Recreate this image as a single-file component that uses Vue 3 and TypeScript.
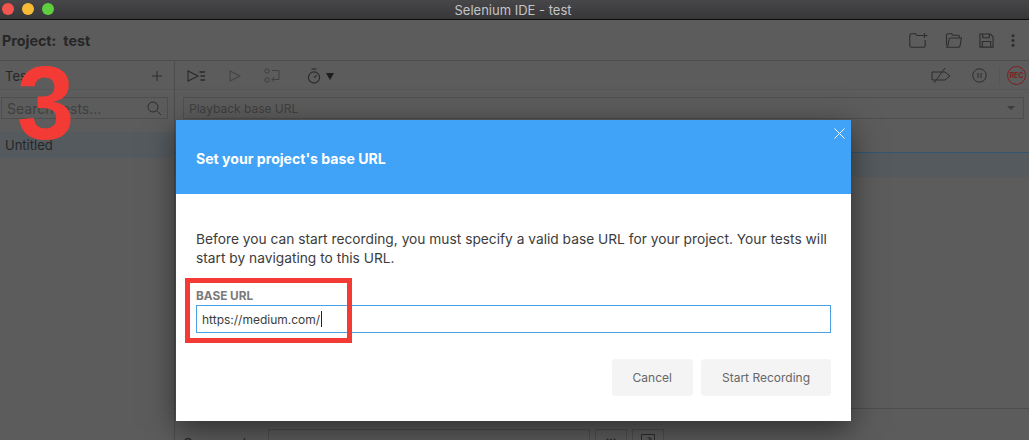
<template>
  <div class="window">
    <div class="titlebar">
      <div class="lights">
        <span class="light red"></span>
        <span class="light yellow"></span>
        <span class="light green"></span>
      </div>
      <span class="window-title">Selenium IDE - test</span>
    </div>

    <header class="project-bar">
      <div class="project-name"><b>Project:</b><b>test</b></div>
      <div class="project-actions">
        <svg width="19" height="15" viewBox="0 0 19 15" fill="none" stroke="#2d2d2d" stroke-width="1.1">
          <path d="M13 2.5H8L6.5 0.8H2.5Q0.8 0.8 0.8 2.5V12.5Q0.8 14.2 2.5 14.2H14.5Q16.2 14.2 16.2 12.5V7" />
          <path d="M15.5 0V5M13 2.5H18.5" />
        </svg>
        <svg width="17" height="15" viewBox="0 0 17 15" fill="none" stroke="#2d2d2d" stroke-width="1.1">
          <path d="M1.5 12.5V2.2Q1.5 0.8 3 0.8H6.5L8 2.2H13Q14.5 2.2 14.5 3.7V4.8" />
          <path d="M1 14.2H13.5Q14.6 14.2 15 13L16.4 5H5.5Q4.4 5 4.1 6.3L3 12.5Q2.7 14.2 1 14.2Z" />
        </svg>
        <svg width="15" height="15" viewBox="0 0 16 16" fill="none" stroke="#2d2d2d" stroke-width="1.2">
          <path d="M1 1H12L15 4V15H1Z" />
          <path d="M4 1V5H11V1M3.5 15V9H12.5V15" />
        </svg>
        <svg width="4" height="13" viewBox="0 0 4 13" fill="#2d2d2d">
          <circle cx="2" cy="1.7" r="1.5" />
          <circle cx="2" cy="6.5" r="1.5" />
          <circle cx="2" cy="11.3" r="1.5" />
        </svg>
      </div>
    </header>

    <div class="workspace">
      <aside class="sidebar">
        <div class="side-head">
          <span>Tests</span>
          <svg width="12" height="12" viewBox="0 0 12 12" stroke="#2d2d2d" stroke-width="1">
            <path d="M6 1V11M1 6H11" />
          </svg>
        </div>
        <div class="search">
          <span>Search tests...</span>
          <svg width="15" height="15" viewBox="0 0 15 15" fill="none" stroke="#2d2d2d" stroke-width="1">
            <circle cx="6" cy="6" r="5" />
            <path d="M9.7 9.7L14 14" />
          </svg>
        </div>
        <div class="test-row">Untitled</div>
      </aside>

      <main class="editor">
        <div class="toolbar">
          <div class="tools">
            <svg width="19" height="12" viewBox="0 0 19 12" fill="none" stroke="#2a2a2a" stroke-width="1.1">
              <path d="M1 1V11L11 6Z" />
              <path d="M12.5 2H18M13.5 6H18M13.5 10H18" stroke-width="1.6" />
            </svg>
            <svg class="tool-play" width="12" height="12" viewBox="0 0 12 12" fill="none" stroke="#444" stroke-width="1.1">
              <path d="M1 1V11L11 6Z" />
            </svg>
            <svg class="tool-step" width="16" height="15" viewBox="0 0 16 15" fill="none" stroke="#404040" stroke-width="1">
              <circle cx="3" cy="3" r="2.2" />
              <circle cx="3" cy="12" r="2.2" />
              <path d="M8 2.5H15V11.5H8M10.5 9L8 11.5L10.5 14" />
            </svg>
            <svg class="tool-speed" width="14" height="16" viewBox="0 0 14 16" fill="none" stroke="#2a2a2a" stroke-width="1.1">
              <path d="M4.5 1H9.5" />
              <circle cx="7" cy="9.5" r="5.6" />
              <path d="M7 9.5L9.5 7.5" />
            </svg>
            <span class="caret-down"></span>
          </div>
          <div class="tools">
            <svg width="20" height="17" viewBox="0 0 20 17" fill="none" stroke="#2d2d2d" stroke-width="1">
              <path d="M1 5H14L19 9L14 13H1Z" />
              <path d="M14 1L3 16" />
            </svg>
            <svg class="tool-pause" width="15" height="15" viewBox="0 0 15 15" fill="none" stroke="#2d2d2d" stroke-width="1">
              <circle cx="7.5" cy="7.5" r="6.7" />
              <path d="M6 5V10M9 5V10" />
            </svg>
            <span class="tool-sep"></span>
            <span class="rec">REC</span>
          </div>
        </div>

        <div class="url-box">
          <span>Playback base URL</span>
          <span class="caret-small"></span>
        </div>

        <div class="table-head"></div>
        <div class="table-row"></div>
        <div class="table-fill"></div>

        <div class="command-row">
          <span class="command-label">Command</span>
          <span class="command-input"></span>
          <span class="command-btn">
            <svg class="more-dots" width="10" height="3" viewBox="0 0 10 3" fill="#2d2d2d">
              <circle cx="1.5" cy="1.5" r="1" />
              <circle cx="5" cy="1.5" r="1" />
              <circle cx="8.5" cy="1.5" r="1" />
            </svg>
          </span>
          <span class="command-btn">
            <svg width="14" height="14" viewBox="0 0 14 14" fill="none" stroke="#2d2d2d" stroke-width="1">
              <path d="M0.5 0.5H13.5V13.5H0.5Z" />
              <path d="M5 9L10 4M6.5 4H10V7.5" />
            </svg>
          </span>
        </div>
      </main>
    </div>

    <div class="dialog">
      <div class="dialog-head">
        <h1>Set your project's base URL</h1>
        <svg class="dialog-close" width="11" height="11" viewBox="0 0 11 11" stroke="#fff" stroke-width="1">
          <path d="M0.5 0.5L10.5 10.5M10.5 0.5L0.5 10.5" />
        </svg>
      </div>
      <div class="dialog-body">
        <p>Before you can start recording, you must specify a valid base URL for your project. Your tests will start by navigating to this URL.</p>
        <label class="field-label">BASE URL</label>
        <div class="field">https://medium.com/<i class="text-cursor"></i></div>
        <div class="dialog-actions">
          <button>Cancel</button>
          <button>Start Recording</button>
        </div>
      </div>
    </div>

    <div class="step-number">3</div>
    <div class="highlight"></div>
  </div>
</template>

<script setup lang="ts">
</script>

<style>
html,
body {
  margin: 0;
  background: #5c5c5c;
  overflow: hidden;
}
</style>

<style scoped>
.window {
  position: relative;
  width: 1029px;
  height: 440px;
  overflow: hidden;
  display: flex;
  flex-direction: column;
  background: #5c5c5c;
  color: #262626;
  font-family: Inter, "Liberation Sans", sans-serif;
  font-size: 13px;
}

.titlebar {
  height: 19px;
  flex: none;
  display: flex;
  align-items: center;
  justify-content: center;
  position: relative;
  padding-right: 3px;
  background: linear-gradient(#47474a, #37373a);
  border-bottom: 1px solid #0c0c0c;
}

.lights {
  position: absolute;
  left: 2px;
  top: 3px;
  display: flex;
  gap: 8px;
}

.light {
  width: 12px;
  height: 12px;
  border-radius: 50%;
}
.red { background: #f4544e; }
.yellow { background: #f7bb35; }
.green { background: #5fcf40; }

.window-title {
  color: #c4c4c4;
  font-size: 13px;
}

.project-bar {
  height: 41px;
  flex: none;
  display: flex;
  align-items: center;
  justify-content: space-between;
  padding: 0 14px 0 2px;
  box-sizing: border-box;
  border-bottom: 1px solid #4c4c4c;
}

.project-name {
  display: flex;
  gap: 7px;
  font-size: 14.3px;
  padding-top: 1px;
}

.project-actions {
  display: flex;
  align-items: center;
  gap: 17px;
}

.workspace {
  flex: 1;
  display: flex;
  min-height: 0;
}

.sidebar {
  width: 175px;
  flex: none;
  box-sizing: border-box;
  border-right: 1px solid #4c4c4c;
}

.side-head {
  height: 29px;
  display: flex;
  align-items: center;
  justify-content: space-between;
  padding: 1px 11px 0 5px;
  box-sizing: border-box;
  border-bottom: 1px solid #565656;
}

.search {
  height: 22px;
  box-sizing: border-box;
  margin: 7px 6px 0 1px;
  padding: 0 5px;
  display: flex;
  align-items: center;
  justify-content: space-between;
  border: 1px solid #4e4e4e;
  color: #3f3f3f;
  font-size: 14px;
}

.test-row {
  height: 26px;
  margin-top: 13px;
  padding-left: 5px;
  display: flex;
  align-items: center;
  background: #545a5e;
}

.editor {
  flex: 1;
  min-width: 0;
  display: flex;
  flex-direction: column;
}

.toolbar {
  height: 29px;
  flex: none;
  box-sizing: border-box;
  display: flex;
  align-items: center;
  justify-content: space-between;
  padding: 1px 3px 0 12px;
  border-bottom: 1px solid #565656;
}

.tools {
  display: flex;
  align-items: center;
}

.tool-play { margin-left: 23px; }
.tool-step { margin-left: 23px; }
.tool-speed { margin-left: 27px; }
.tool-pause { margin-left: 21px; }

.caret-down {
  width: 0;
  height: 0;
  margin: 1px 0 0 5px;
  border-left: 4.5px solid transparent;
  border-right: 4.5px solid transparent;
  border-top: 7px solid #1d1d1d;
}

.tool-sep {
  width: 1px;
  height: 20px;
  margin: 0 7px 0 12px;
  background: #565656;
}

.rec {
  width: 19px;
  height: 19px;
  box-sizing: border-box;
  border: 1.3px solid #7d1f1f;
  border-radius: 50%;
  display: flex;
  align-items: center;
  justify-content: center;
  color: #7d1f1f;
  font-size: 7px;
  font-weight: 700;
}

.url-box {
  height: 22px;
  flex: none;
  box-sizing: border-box;
  margin: 7px 5px 0 8px;
  padding: 0 5px;
  display: flex;
  align-items: center;
  justify-content: space-between;
  border: 1px solid #4e4e4e;
  color: #3f3f3f;
  font-size: 12px;
}

.caret-small {
  width: 0;
  height: 0;
  margin-right: 3px;
  border-left: 4px solid transparent;
  border-right: 4px solid transparent;
  border-top: 4px solid #3c3c3c;
}

.table-head {
  height: 33px;
  flex: none;
  border-bottom: 1px solid #33566f;
}

.table-row {
  height: 24px;
  flex: none;
  background: #545a5e;
}

.table-fill {
  flex: 1;
  border-bottom: 1px solid #4c4c4c;
}

.command-row {
  height: 31px;
  flex: none;
  display: flex;
  align-items: flex-start;
  padding: 20px 0 0 8px;
  box-sizing: border-box;
}

.command-label {
  width: 85px;
  margin-top: 6px;
  line-height: 16px;
}

.command-input {
  width: 320px;
  height: 30px;
  border: 1px solid #4e4e4e;
}

.command-btn {
  width: 30px;
  height: 30px;
  margin-left: 5px;
  padding-top: 4px;
  border: 1px solid #4e4e4e;
  display: flex;
  align-items: flex-start;
  justify-content: center;
}

.more-dots {
  margin-top: 4px;
}

.dialog {
  position: absolute;
  left: 176px;
  top: 120px;
  width: 675px;
  height: 301px;
  background: #fff;
  box-shadow: 0 8px 28px rgba(0, 0, 0, 0.5);
}

.dialog-head {
  height: 74px;
  position: relative;
  box-sizing: border-box;
  padding-left: 20px;
  display: flex;
  align-items: center;
  background: #40a3f7;
}

.dialog-head h1 {
  margin: 3px 0 0;
  color: #fff;
  font-size: 14.1px;
  font-weight: 700;
}

.dialog-close {
  position: absolute;
  right: 6px;
  top: 8px;
}

.dialog-body {
  padding: 36px 20px 0;
}

.dialog-body p {
  margin: 0;
  color: #3c3c3c;
  font-size: 13.75px;
  line-height: 19px;
}

.field-label {
  display: block;
  margin-top: 21px;
  color: #7a7a7a;
  font-size: 11.8px;
  font-weight: 700;
  line-height: 15px;
}

.field {
  height: 28px;
  box-sizing: border-box;
  margin-top: 1px;
  padding-left: 5px;
  display: flex;
  align-items: center;
  border: 1px solid #4b9fe3;
  color: #3c3c3c;
  font-size: 12px;
}

.text-cursor {
  width: 1px;
  height: 16px;
  margin-left: 1px;
  background: #222;
}

.dialog-actions {
  display: flex;
  justify-content: flex-end;
  gap: 8px;
  margin-top: 26px;
}

.dialog-actions button {
  height: 37px;
  padding: 0 21px;
  border: none;
  border-radius: 4px;
  background: #f4f4f4;
  color: #666;
  font-family: inherit;
  font-size: 12px;
}

.step-number {
  position: absolute;
  left: 17px;
  top: 47px;
  color: #f33a34;
  font-family: "Liberation Sans", sans-serif;
  font-size: 103px;
  font-weight: 700;
  line-height: 114px;
}

.highlight {
  position: absolute;
  left: 185px;
  top: 278px;
  width: 157px;
  height: 55px;
  border: 5px solid #f33a34;
}
</style>
